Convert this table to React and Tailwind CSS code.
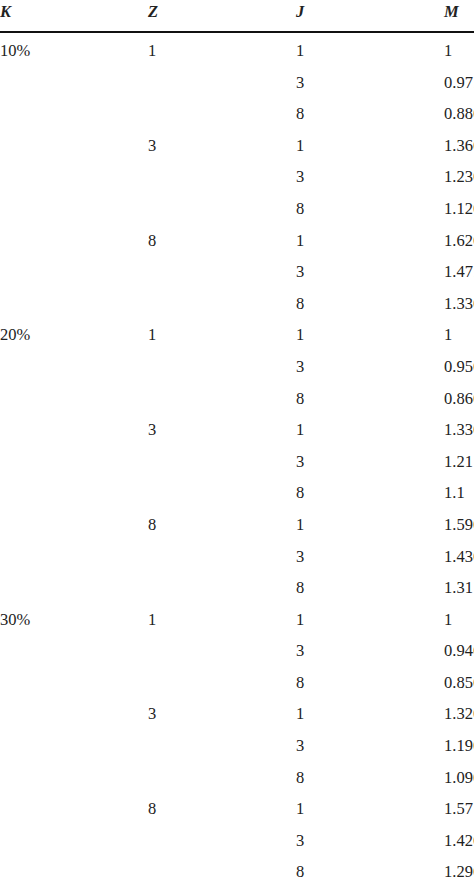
import React from "react";

const rows = [
  ["10%", "1", "1", "1"],
  ["", "", "3", "0.971"],
  ["", "", "8", "0.886"],
  ["", "3", "1", "1.366"],
  ["", "", "3", "1.236"],
  ["", "", "8", "1.126"],
  ["", "8", "1", "1.626"],
  ["", "", "3", "1.471"],
  ["", "", "8", "1.336"],
  ["20%", "1", "1", "1"],
  ["", "", "3", "0.956"],
  ["", "", "8", "0.866"],
  ["", "3", "1", "1.336"],
  ["", "", "3", "1.21"],
  ["", "", "8", "1.1"],
  ["", "8", "1", "1.596"],
  ["", "", "3", "1.436"],
  ["", "", "8", "1.31"],
  ["30%", "1", "1", "1"],
  ["", "", "3", "0.946"],
  ["", "", "8", "0.856"],
  ["", "3", "1", "1.326"],
  ["", "", "3", "1.196"],
  ["", "", "8", "1.096"],
  ["", "8", "1", "1.57"],
  ["", "", "3", "1.426"],
  ["", "", "8", "1.296"],
];

export default function App() {
  return (
    <div
      className="w-[474px] h-[885px] overflow-hidden bg-white text-[#222] text-[16.5px]"
      style={{ fontFamily: '"Liberation Serif", "Times New Roman", serif' }}
    >
      <div className="w-[600px]">
        <div className="grid grid-cols-[148px_148px_148px_156px] h-[31px] leading-[23px] font-bold italic">
          <div>K</div>
          <div>Z</div>
          <div>J</div>
          <div>M</div>
        </div>
        <div className="h-[2px] bg-[#111]" />
        <div className="pt-[2px]">
          {rows.map((r, i) => (
            <div
              key={i}
              className="grid grid-cols-[148px_148px_148px_156px] h-[31.6px] leading-[31.6px] whitespace-nowrap"
            >
              <div>{r[0]}</div>
              <div>{r[1]}</div>
              <div>{r[2]}</div>
              <div>{r[3]}</div>
            </div>
          ))}
        </div>
      </div>
    </div>
  );
}
